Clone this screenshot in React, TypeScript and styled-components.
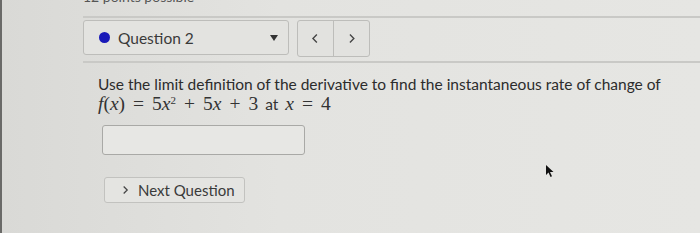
import styled, { createGlobalStyle } from "styled-components";

const GlobalStyle = createGlobalStyle`
  html, body {
    margin: 0;
    padding: 0;
  }
  body {
    width: 700px;
    height: 233px;
    overflow: hidden;
    background: linear-gradient(90deg, #d9d9d6 0%, #e3e3e0 40%, #e6e6e3 100%);
    font-family: Lato, "Open Sans", sans-serif;
    color: #2b2b2b;
  }
`;

const Screen = styled.div`
  position: relative;
  display: flow-root;
  width: 700px;
  height: 233px;
  border-left: 2px solid #6a6a68;
  box-sizing: border-box;
  padding-left: 81px;
`;

const PointsText = styled.div`
  font-size: 14px;
  line-height: 16px;
  margin-top: -11px;
  color: #555;
`;

const Rule = styled.div<{ $top: number }>`
  height: 2px;
  margin-top: ${(p) => p.$top}px;
  background: #c9c9c6;
`;

const Toolbar = styled.div`
  display: flex;
  gap: 8px;
  margin-top: 2px;
`;

const Select = styled.div`
  display: flex;
  align-items: center;
  width: 206px;
  height: 35px;
  box-sizing: border-box;
  padding: 0 10px 0 15px;
  border: 1px solid #bdbdba;
  border-radius: 3px;
  background: #e3e3e0;
  font-size: 15.5px;
  color: #3a3a3a;
`;

const Dot = styled.span`
  width: 11px;
  height: 11px;
  border-radius: 50%;
  background: #1a1ab8;
  margin-right: 8px;
`;

const Caret = styled.svg`
  margin-left: auto;
`;

const Pager = styled.div`
  display: flex;
  height: 35px;
  border: 1px solid #bdbdba;
  border-radius: 3px;
  background: #e2e2df;
`;

const PageButton = styled.div<{ $divider?: boolean }>`
  width: 35px;
  display: flex;
  align-items: center;
  justify-content: center;
  color: #444;
  border-right: ${(p) => (p.$divider ? "1px solid #bdbdba" : "none")};
`;

const Body = styled.div`
  padding-left: 15px;
  padding-top: 12px;
`;

const Prompt = styled.div`
  font-size: 15.5px;
  line-height: 19px;
  color: #2c2c2c;
`;

const MathLine = styled.div`
  font-family: "Liberation Serif", "DejaVu Serif", serif;
  font-size: 19.5px;
  line-height: 19px;
  color: #333;
  sup {
    font-size: 11px;
    vertical-align: 6px;
    line-height: 0;
  }
`;

const Var = styled.i``;

const Op = styled.span`
  margin: 0 8px;
`;

const Plain = styled.span`
  font-family: Lato, "Open Sans", sans-serif;
  font-size: 15.5px;
  margin: 0 7px;
`;

const Answer = styled.div`
  width: 203px;
  height: 30px;
  box-sizing: border-box;
  margin: 11px 0 0 4px;
  border: 1px solid #a9a9a6;
  border-radius: 3px;
  background: #e7e7e4;
`;

const NextButton = styled.div`
  display: flex;
  align-items: center;
  gap: 9px;
  width: 141px;
  height: 26px;
  box-sizing: border-box;
  margin: 22px 0 0 6px;
  padding-left: 16px;
  border: 1px solid #c2c2bf;
  border-radius: 3px;
  background: #e4e4e1;
  font-size: 15px;
  color: #3a3a3a;
`;

const Cursor = styled.svg`
  position: absolute;
  left: 543px;
  top: 164px;
`;

function Chevron({ dir, size = 10 }: { dir: "left" | "right"; size?: number }) {
  const d = dir === "left" ? "M6 1 L2 5 L6 9" : "M3 1 L7 5 L3 9";
  return (
    <svg width={size * 0.8} height={size} viewBox="0 0 9 10">
      <path d={d} fill="none" stroke="#444" strokeWidth="1.4" />
    </svg>
  );
}

export default function App() {
  return (
    <>
      <GlobalStyle />
      <Screen>
        <PointsText>12 points possible</PointsText>
        <Rule $top={11} />
        <Toolbar>
          <Select>
            <Dot />
            Question 2
            <Caret width="8" height="6" viewBox="0 0 8 6">
              <path d="M0 0 L8 0 L4 6 Z" fill="#333" />
            </Caret>
          </Select>
          <Pager>
            <PageButton $divider>
              <Chevron dir="left" size={11} />
            </PageButton>
            <PageButton>
              <Chevron dir="right" size={11} />
            </PageButton>
          </Pager>
        </Toolbar>
        <Rule $top={4} />
        <Body>
          <Prompt>
            Use the limit definition of the derivative to find the instantaneous rate of change of
          </Prompt>
          <MathLine>
            <Var>f</Var>(<Var>x</Var>)<Op>=</Op>5<Var>x</Var>
            <sup>2</sup>
            <Op>+</Op>5<Var>x</Var>
            <Op>+</Op>3<Plain>at</Plain>
            <Var>x</Var>
            <Op>=</Op>4
          </MathLine>
          <Answer />
          <NextButton>
            <Chevron dir="right" size={10} />
            Next Question
          </NextButton>
        </Body>
        <Cursor width="10" height="14" viewBox="0 0 10 14">
          <path d="M1 1 L1 11 L3.5 8.5 L5.5 13 L7 12.3 L5 8 L8.5 8 Z" fill="#111" />
        </Cursor>
      </Screen>
    </>
  );
}
